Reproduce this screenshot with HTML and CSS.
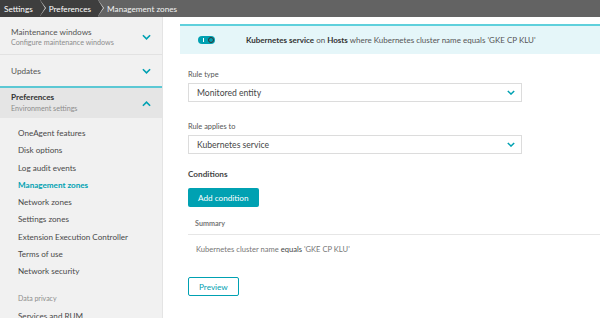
FILE: index.html
```html
<!DOCTYPE html>
<html>
<head>
    <title>Management zones</title>
    <link rel="stylesheet" href="styles.css">
</head>
<body>
    <nav class="crumbs">
        <span class="crumb dark">Settings</span>
        <span class="crumb dark">Preferences</span>
        <span class="crumb current">Management zones</span>
    </nav>

    <div class="layout">
        <aside class="sidebar">
            <div class="group">
                <div class="group-text">
                    <div class="group-title">Maintenance windows</div>
                    <div class="group-sub">Configure maintenance windows</div>
                </div>
                <svg class="chev" viewBox="0 0 10 6"><path d="M1 1l4 4 4-4"/></svg>
            </div>
            <div class="group single">
                <div class="group-text">
                    <div class="group-title">Updates</div>
                </div>
                <svg class="chev" viewBox="0 0 10 6"><path d="M1 1l4 4 4-4"/></svg>
            </div>
            <div class="group open">
                <div class="group-text">
                    <div class="group-title">Preferences</div>
                    <div class="group-sub">Environment settings</div>
                </div>
                <svg class="chev" viewBox="0 0 10 6"><path d="M1 5l4-4 4 4"/></svg>
            </div>
            <ul class="links">
                <li>OneAgent features</li>
                <li>Disk options</li>
                <li>Log audit events</li>
                <li class="active">Management zones</li>
                <li>Network zones</li>
                <li>Settings zones</li>
                <li>Extension Execution Controller</li>
                <li>Terms of use</li>
                <li>Network security</li>
                <li class="caption">Data privacy</li>
                <li>Services and RUM</li>
            </ul>
        </aside>

        <main class="content">
            <div class="banner">
                <span class="toggle"><span class="knob"></span></span>
                <span class="rule-text"><b>Kubernetes service</b> on <b>Hosts</b> where Kubernetes cluster name equals 'GKE CP KLU'</span>
            </div>

            <div class="form">
                <div class="field">
                    <label>Rule type</label>
                    <div class="select">
                        <span>Monitored entity</span>
                        <svg class="chev small" viewBox="0 0 10 6"><path d="M1 1l4 4 4-4"/></svg>
                    </div>
                </div>

                <div class="field">
                    <label>Rule applies to</label>
                    <div class="select">
                        <span>Kubernetes service</span>
                        <svg class="chev small" viewBox="0 0 10 6"><path d="M1 1l4 4 4-4"/></svg>
                    </div>
                </div>

                <h3 class="section-title">Conditions</h3>
                <button class="btn-primary">Add condition</button>

                <div class="table">
                    <div class="table-head">Summary</div>
                    <div class="table-row">Kubernetes cluster name <span class="strong">equals</span> 'GKE CP KLU'</div>
                </div>

                <button class="btn-outline">Preview</button>
            </div>
        </main>
    </div>
</body>
</html>
```

FILE: styles.css
```css
body {
    margin: 0;
    font-family: Lato, "Open Sans", Arial, sans-serif;
    font-size: 8.5px;
    color: #454646;
    background: #fff;
    overflow: hidden;
}
.crumbs {
    display: flex;
    height: 17px;
    background: #636363;
}
.crumb {
    display: flex;
    align-items: center;
    padding: 0 7px 0 9px;
    color: #fff;
    font-size: 8.2px;
    position: relative;
}
.crumb:first-child {
    padding-left: 4px;
}
.crumb.dark {
    background: #3e3e3e;
}
.crumb.dark::after {
    content: "";
    position: absolute;
    right: -5px;
    top: 0;
    border-top: 8.5px solid transparent;
    border-bottom: 8.5px solid transparent;
    border-left: 5px solid #3e3e3e;
    z-index: 2;
}
.crumb.dark::before {
    content: "";
    position: absolute;
    right: -6px;
    top: 0;
    border-top: 8.5px solid transparent;
    border-bottom: 8.5px solid transparent;
    border-left: 6px solid #e0e0e0;
    z-index: 1;
}
.crumb.current {
    color: #f2f2f2;
}
.layout {
    display: flex;
    height: 301px;
}
.sidebar {
    width: 162px;
    flex-shrink: 0;
    background: #f1f1f1;
    border-right: 1px solid #e4e4e4;
    padding-top: 3px;
}
.group {
    display: flex;
    align-items: center;
    justify-content: space-between;
    height: 34px;
    padding: 0 11px 0 11px;
    border-bottom: 1px solid #e2e2e2;
}
.group.single {
    height: 31px;
    border-bottom: 2px solid #5cc8d4;
}
.group.open {
    background: #e5e5e5;
    height: 30px;
    border-bottom: none;
    align-items: flex-start;
    padding-top: 4px;
    box-sizing: border-box;
}
.group.open .chev {
    margin-top: 9px;
}
.group-title {
    font-size: 8.2px;
    color: #555;
}
.group.open .group-title {
    font-weight: bold;
    color: #333;
}
.group-sub {
    font-size: 7.2px;
    color: #8d8d8d;
    margin-top: 1px;
}
.group.open .group-sub {
    margin-top: 2px;
}
.chev {
    width: 9px;
    height: 6px;
    fill: none;
    stroke: #00a1b2;
    stroke-width: 1.8;
}
.chev.small {
    width: 8px;
    height: 5px;
}
.links {
    list-style: none;
    margin: 0;
    padding: 7px 0 0 18px;
}
.links li {
    height: 17.25px;
    line-height: 17.25px;
    font-size: 8.1px;
    color: #4a4a4a;
}
.links li.active {
    color: #00a1b2;
    font-weight: bold;
}
.links li.caption {
    font-size: 7px;
    color: #8d8d8d;
    margin-top: 10px;
}
.content {
    flex: 1;
    padding: 7px 0 0 17px;
}
.banner {
    display: flex;
    align-items: center;
    height: 28px;
    background: #e5f6f9;
    border-top: 2px solid #5fd0dc;
    padding-left: 18px;
}
.toggle {
    width: 17px;
    height: 8px;
    border-radius: 4px;
    background: #00a1b2;
    position: relative;
    margin-right: 31px;
}
.knob {
    position: absolute;
    right: 1px;
    top: 1px;
    width: 6px;
    height: 6px;
    border-radius: 50%;
    background: #00a1b2;
    border: 1.5px solid #333;
    box-sizing: border-box;
}
.toggle::before {
    content: "";
    position: absolute;
    left: 5px;
    top: 2px;
    width: 1px;
    height: 4px;
    background: #fff;
}
.rule-text {
    color: #555;
    font-size: 8px;
}
.rule-text b {
    color: #333;
}
.form {
    padding-left: 8px;
}
.field {
    margin-top: 16px;
    margin-right: 78px;
}
.field + .field {
    margin-top: 20px;
}
.field label {
    display: block;
    height: 10px;
    line-height: 10px;
    font-size: 7.4px;
    color: #555;
    margin-bottom: 3px;
}
.select {
    display: flex;
    align-items: center;
    justify-content: space-between;
    height: 19px;
    border: 1px solid #dcdcdc;
    padding: 0 6px 0 8px;
    font-size: 8.6px;
    color: #454646;
    box-sizing: border-box;
}
.section-title {
    height: 12px;
    line-height: 12px;
    font-size: 8.2px;
    font-weight: bold;
    color: #454646;
    margin: 14px 0 8px;
}
.btn-primary {
    display: block;
    background: #00a1b2;
    color: #fff;
    border: none;
    border-radius: 2px;
    height: 19px;
    padding: 0 10px;
    font-family: inherit;
    font-size: 8.2px;
}
.table {
    margin-top: 8px;
}
.table-head {
    height: 20px;
    line-height: 18px;
    padding-left: 7px;
    font-size: 7.2px;
    font-weight: bold;
    color: #777;
    border-bottom: 1px solid #e6e6e6;
    box-sizing: border-box;
}
.table-row {
    height: 29px;
    line-height: 28px;
    padding-left: 8px;
    font-size: 7.6px;
    color: #777;
}
.table-row .strong {
    color: #454646;
}
.btn-outline {
    display: block;
    margin-top: 13px;
    height: 19px;
    padding: 0 10px;
    background: #fff;
    border: 1px solid #00a1b2;
    border-radius: 2px;
    color: #00a1b2;
    font-family: inherit;
    font-size: 8.2px;
}
```
